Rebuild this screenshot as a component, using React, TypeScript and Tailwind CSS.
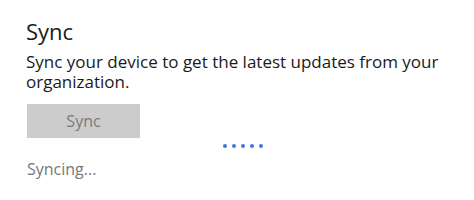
export default function App() {
    return (
        <div className="w-[474px] h-[200px] bg-white text-[#1a1a1a] font-['Open_Sans',sans-serif] pl-[26px] pt-[17px]">
            <h1 className="text-[22px] leading-[28px] font-normal">Sync</h1>
            <p className="mt-[7px] text-[17px] leading-[20px] w-[440px]">
                Sync your device to get the latest updates from your organization.
            </p>
            <div className="mt-[12px] flex items-end">
                <button className="w-[113px] h-[34px] bg-[#cccccc] text-[#7a7a7a] text-[16px] ml-[1px]">Sync</button>
                <div className="ml-[83px] mb-[-10px] flex gap-[5px]">
                    {[0, 1, 2, 3, 4].map(i => (
                        <span key={i} className="w-[4px] h-[4px] rounded-full bg-[#3b78d8]" />
                    ))}
                </div>
            </div>
            <p className="mt-[21px] ml-[1px] text-[16px] leading-[20px] text-[#777777]">Syncing...</p>
        </div>
    );
}
